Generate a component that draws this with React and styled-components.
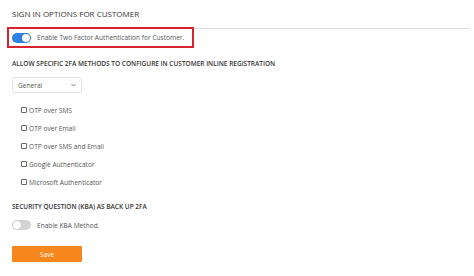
import styled, { createGlobalStyle } from "styled-components";

const Global = createGlobalStyle`
  html, body {
    margin: 0;
    padding: 0;
    background: #fff;
  }
  body {
    font-family: "Open Sans", "Noto Sans", sans-serif;
    color: #555;
  }
`;

const Page = styled.div`
  width: 474px;
  height: 276px;
  padding: 0 4px 0 8px;
  box-sizing: border-box;
  display: flex;
  flex-direction: column;
  align-items: flex-start;
`;

const Title = styled.div`
  align-self: stretch;
  height: 28px;
  line-height: 28px;
  padding-left: 4px;
  font-size: 8px;
  font-weight: 500;
  color: #333;
  border-bottom: 1px solid #ddd;
`;

const Highlight = styled.div`
  margin: -2px 0 0 -1px;
  height: 21px;
  box-sizing: border-box;
  border: 2px solid #d9232e;
  padding: 0 8px 0 3px;
  display: inline-flex;
  align-items: center;
  gap: 6px;
`;

const Toggle = styled.span`
  position: relative;
  width: 19px;
  height: 10px;
  border-radius: 5px;
  background: ${(p) => (p.$on ? "#2f80e4" : "#d4d4d4")};
  flex-shrink: 0;

  &::after {
    content: "";
    position: absolute;
    top: 1px;
    left: ${(p) => (p.$on ? "10px" : "1px")};
    width: 8px;
    height: 8px;
    border-radius: 50%;
    background: #fff;
    box-shadow: 0 0 1px rgba(0, 0, 0, 0.3);
  }
`;

const Label = styled.span`
  font-size: 6.6px;
  color: #555;
  white-space: nowrap;
`;

const Heading = styled.div`
  margin: ${(p) => p.$top}px 0 0 4px;
  font-size: 6.5px;
  font-weight: 600;
  color: #333;
  line-height: 10px;
  white-space: nowrap;
`;

const Select = styled.div`
  margin: 8px 0 0 4px;
  width: 70px;
  height: 16px;
  box-sizing: border-box;
  border: 1px solid #e3e3e3;
  border-radius: 2px;
  padding: 0 5px;
  display: flex;
  align-items: center;
  justify-content: space-between;
  font-size: 6.6px;
  color: #555;
`;

const Methods = styled.div`
  margin: 12px 0 0 13px;
  display: flex;
  flex-direction: column;
  gap: 8px;
`;

const Method = styled.div`
  height: 10px;
  display: flex;
  align-items: center;
  gap: 2px;
  font-size: 6.6px;
  color: #555;
`;

const Box = styled.span`
  width: 4px;
  height: 4px;
  border: 1px solid #666;
  border-radius: 1px;
`;

const Row = styled.div`
  margin: 8px 0 0 4px;
  display: flex;
  align-items: center;
  gap: 6px;
  height: 10px;
`;

const SaveButton = styled.button`
  margin: 16px 0 0 4px;
  width: 70px;
  height: 16px;
  border: none;
  border-radius: 1px;
  background: #f7861c;
  color: #fff;
  font-family: inherit;
  font-size: 6.6px;
  padding: 0;
`;

const methods = [
  "OTP over SMS",
  "OTP over Email",
  "OTP over SMS and Email",
  "Google Authenticator",
  "Microsoft Authenticator",
];

export default function App() {
  return (
    <>
      <Global />
      <Page>
        <Title>SIGN IN OPTIONS FOR CUSTOMER</Title>
        <Highlight>
          <Toggle $on />
          <Label>Enable Two Factor Authentication for Customer.</Label>
        </Highlight>
        <Heading $top={11}>
          ALLOW SPECIFIC 2FA METHODS TO CONFIGURE IN CUSTOMER INLINE REGISTRATION
        </Heading>
        <Select>
          <span>General</span>
          <svg width="5" height="4" viewBox="0 0 10 6">
            <path d="M1 1l4 4 4-4" fill="none" stroke="#555" strokeWidth="1.6" />
          </svg>
        </Select>
        <Methods>
          {methods.map((m) => (
            <Method key={m}>
              <Box />
              {m}
            </Method>
          ))}
        </Methods>
        <Heading $top={15}>SECURITY QUESTION (KBA) AS BACK UP 2FA</Heading>
        <Row>
          <Toggle />
          <Label>Enable KBA Method.</Label>
        </Row>
        <SaveButton>Save</SaveButton>
      </Page>
    </>
  );
}
